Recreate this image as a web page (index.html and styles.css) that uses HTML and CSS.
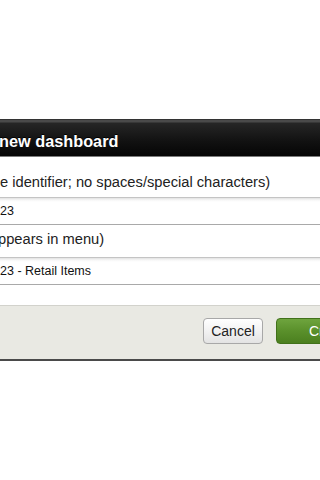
FILE: index.html
```
<!DOCTYPE html>
<html>
<head>
<meta charset="utf-8">
<link rel="stylesheet" href="styles.css">
</head>
<body>
<div class="dialog">
  <div class="header"><span class="title">new dashboard</span></div>
  <div class="form">
    <div class="label label-first">e identifier; no spaces/special characters)</div>
    <div class="input">23</div>
    <div class="label label-second"><span class="shift">ppears in menu)</span></div>
    <div class="input">23 - Retail Items</div>
  </div>
  <div class="footer">
    <button class="btn btn-cancel">Cancel</button>
    <button class="btn btn-create">Create</button>
  </div>
</div>
</body>
</html>
```
FILE: styles.css
```
html, body {
  margin: 0;
  padding: 0;
  background: #fff;
  overflow: hidden;
  width: 320px;
  height: 480px;
}
body {
  font-family: "Liberation Sans", Arial, sans-serif;
  color: #222;
}
.dialog {
  margin-top: 119px;
  margin-left: -20px;
  width: 420px;
}
.header {
  box-sizing: border-box;
  height: 38px;
  padding: 13px 0 0 20px;
  border-top: 1px solid #333;
  border-bottom: 1px solid #7c7c7c;
  background: linear-gradient(#4a4a4a 0, #4a4a4a 2px, #262626 3px, #111 60%, #050505 100%);
}
.title {
  display: block;
  color: #fff;
  font-weight: bold;
  font-size: 16.3px;
  line-height: 17px;
  margin-left: -1px;
  text-shadow: 0 -1px 0 #000;
}
.form {
  background: #fff;
  padding-bottom: 20px;
}
.label {
  padding-left: 20px;
  font-size: 14.7px;
  line-height: 17px;
  color: #222;
  white-space: nowrap;
}
.label-first {
  padding-top: 17px;
  padding-bottom: 6px;
}
.label-second {
  padding-top: 6px;
  padding-bottom: 9px;
}
.shift {
  display: inline-block;
  margin-left: -2px;
}
.input {
  box-sizing: border-box;
  height: 28px;
  padding: 1px 0 0 20px;
  font-size: 12.5px;
  line-height: 25px;
  color: #111;
  background: linear-gradient(#e2e2e2 0, #f6f6f6 2px, #fff 4px);
  border-top: 1px solid #c4c4c4;
  border-bottom: 1px solid #a9a9a9;
  white-space: nowrap;
}
.footer {
  box-sizing: border-box;
  height: 56px;
  display: flex;
  justify-content: flex-end;
  align-items: flex-start;
  gap: 13px;
  padding: 12px 16px 0 0;
  background: #e9e9e3;
  border-top: 1px solid #d2d2cc;
  border-bottom: 2px solid #4a4a4a;
}
.btn {
  box-sizing: border-box;
  height: 26px;
  margin: 0;
  font-family: "Liberation Sans", Arial, sans-serif;
  font-size: 14px;
  line-height: 24px;
  border-radius: 4px;
  padding: 0;
}
.btn-cancel {
  width: 60px;
  color: #222;
  background: linear-gradient(#ffffff, #f2f2f2 50%, #e3e3e3);
  border: 1px solid #a8a8a8;
}
.btn-create {
  width: 108px;
  color: #fff;
  background: linear-gradient(#6ea43e, #5a902b 50%, #4b7f1f);
  border: 1px solid #41711a;
}
```
